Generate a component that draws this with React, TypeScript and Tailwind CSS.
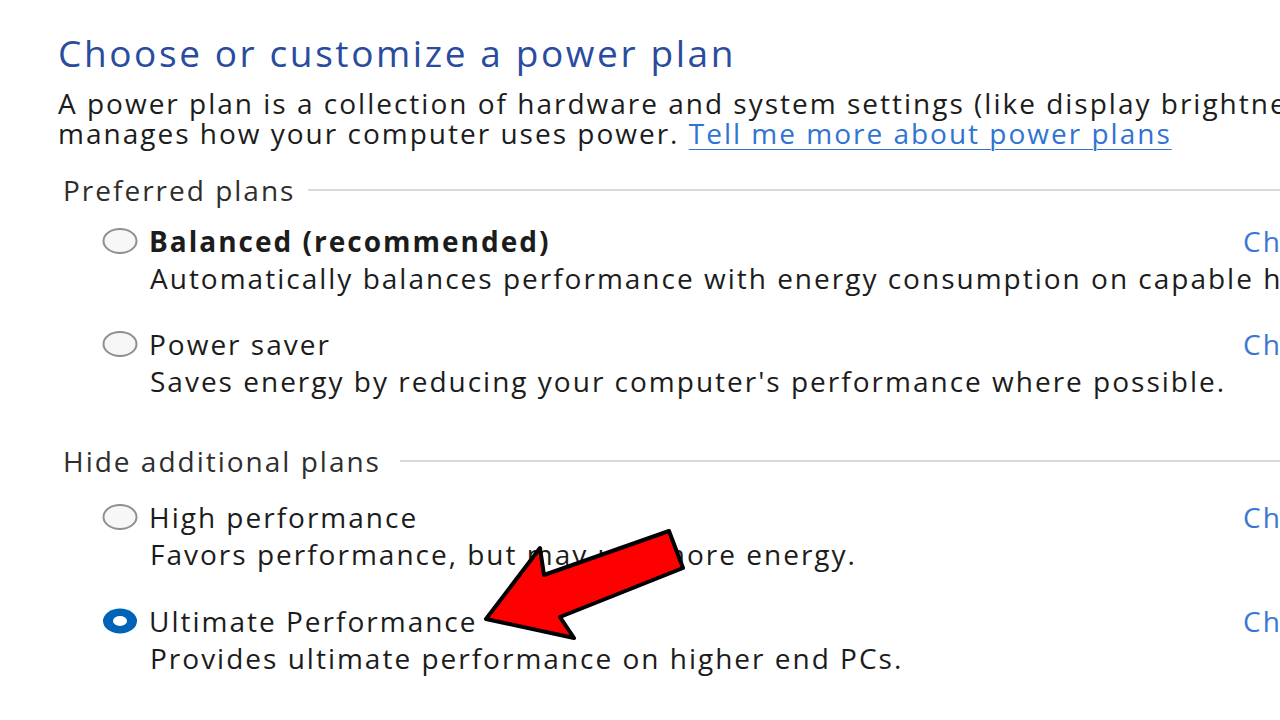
import React from "react";

type Plan = {
  name: string;
  desc: string;
  bold?: boolean;
  selected?: boolean;
};

const preferred: Plan[] = [
  {
    name: "Balanced (recommended)",
    desc: "Automatically balances performance with energy consumption on capable hardware.",
    bold: true,
  },
  {
    name: "Power saver",
    desc: "Saves energy by reducing your computer's performance where possible.",
  },
];

const additional: Plan[] = [
  {
    name: "High performance",
    desc: "Favors performance, but may use more energy.",
  },
  {
    name: "Ultimate Performance",
    desc: "Provides ultimate performance on higher end PCs.",
    selected: true,
  },
];

function Radio({ on }: { on?: boolean }) {
  return (
    <svg width="36" height="28" viewBox="0 0 36 28" className="shrink-0">
      {on ? (
        <>
          <ellipse cx="18" cy="14" rx="17" ry="12.5" fill="#0063b8" />
          <ellipse cx="18" cy="14" rx="7" ry="5" fill="#ffffff" />
        </>
      ) : (
        <ellipse cx="18" cy="14" rx="16.5" ry="12" fill="#f7f7f7" stroke="#8f8f8f" strokeWidth="2" />
      )}
    </svg>
  );
}

function PlanRow({ plan }: { plan: Plan }) {
  return (
    <div className="flex flex-col">
      <div className="flex items-center h-[40px]">
        <div className="flex items-center w-[1141px] shrink-0">
          <Radio on={plan.selected} />
          <span className={`ml-[11px] text-[#1c1c1c] ${plan.bold ? "font-bold" : ""}`}>
            {plan.name}
          </span>
        </div>
        <span className="text-[#3b77d2]">Change plan settings</span>
      </div>
      <div className="pl-[48px] h-[34px] flex items-center text-[#1c1c1c]">{plan.desc}</div>
    </div>
  );
}

function Section({
  title,
  lineFrom,
  plans,
  top,
  gap,
}: {
  title: string;
  lineFrom: number;
  plans: Plan[];
  top: string;
  gap: string;
}) {
  return (
    <div className="flex flex-col">
      <div className="flex items-center h-[40px] pl-[5px]">
        <span className="text-[#2e2e2e] shrink-0" style={{ width: lineFrom }}>
          {title}
        </span>
        <div className="h-[2px] flex-1 bg-[#dadada]" />
      </div>
      <div className={`flex flex-col pl-[44px] ${top} ${gap}`}>
        {plans.map((p) => (
          <PlanRow key={p.name} plan={p} />
        ))}
      </div>
    </div>
  );
}

export default function App() {
  return (
    <div
      className="relative w-[1280px] h-[720px] overflow-hidden bg-white whitespace-nowrap text-[28px] tracking-[2px]"
      style={{ fontFamily: '"Open Sans", "Noto Sans", sans-serif' }}
    >
      <div className="pl-[58px] pt-[30px] flex flex-col">
        <h1 className="text-[37px] leading-[46px] text-[#2a4c9e] tracking-[2.6px]">
          Choose or customize a power plan
        </h1>
        <p className="mt-[12px] leading-[30px] text-[#1c1c1c]">
          A power plan is a collection of hardware and system settings (like display brightness, sleep, etc.) that
          <br />
          manages how your computer uses power.{" "}
          <span className="text-[#2f74d3] underline decoration-1 underline-offset-[5px]">
            Tell me more about power plans
          </span>
        </p>
        <div className="mt-[22px]">
          <Section title="Preferred plans" lineFrom={245} plans={preferred} top="mt-[11px]" gap="gap-[29px]" />
        </div>
        <div className="mt-[43px]">
          <Section title="Hide additional plans" lineFrom={337} plans={additional} top="mt-[16px]" gap="gap-[30px]" />
        </div>
      </div>

      <svg className="absolute inset-0 pointer-events-none" width="1280" height="720">
        <polygon
          points="486,619 540,548 544,575 669,531 683,568 560,617 574,638"
          fill="#ff0000"
          stroke="#000000"
          strokeWidth="4"
          strokeLinejoin="round"
        />
      </svg>
    </div>
  );
}
